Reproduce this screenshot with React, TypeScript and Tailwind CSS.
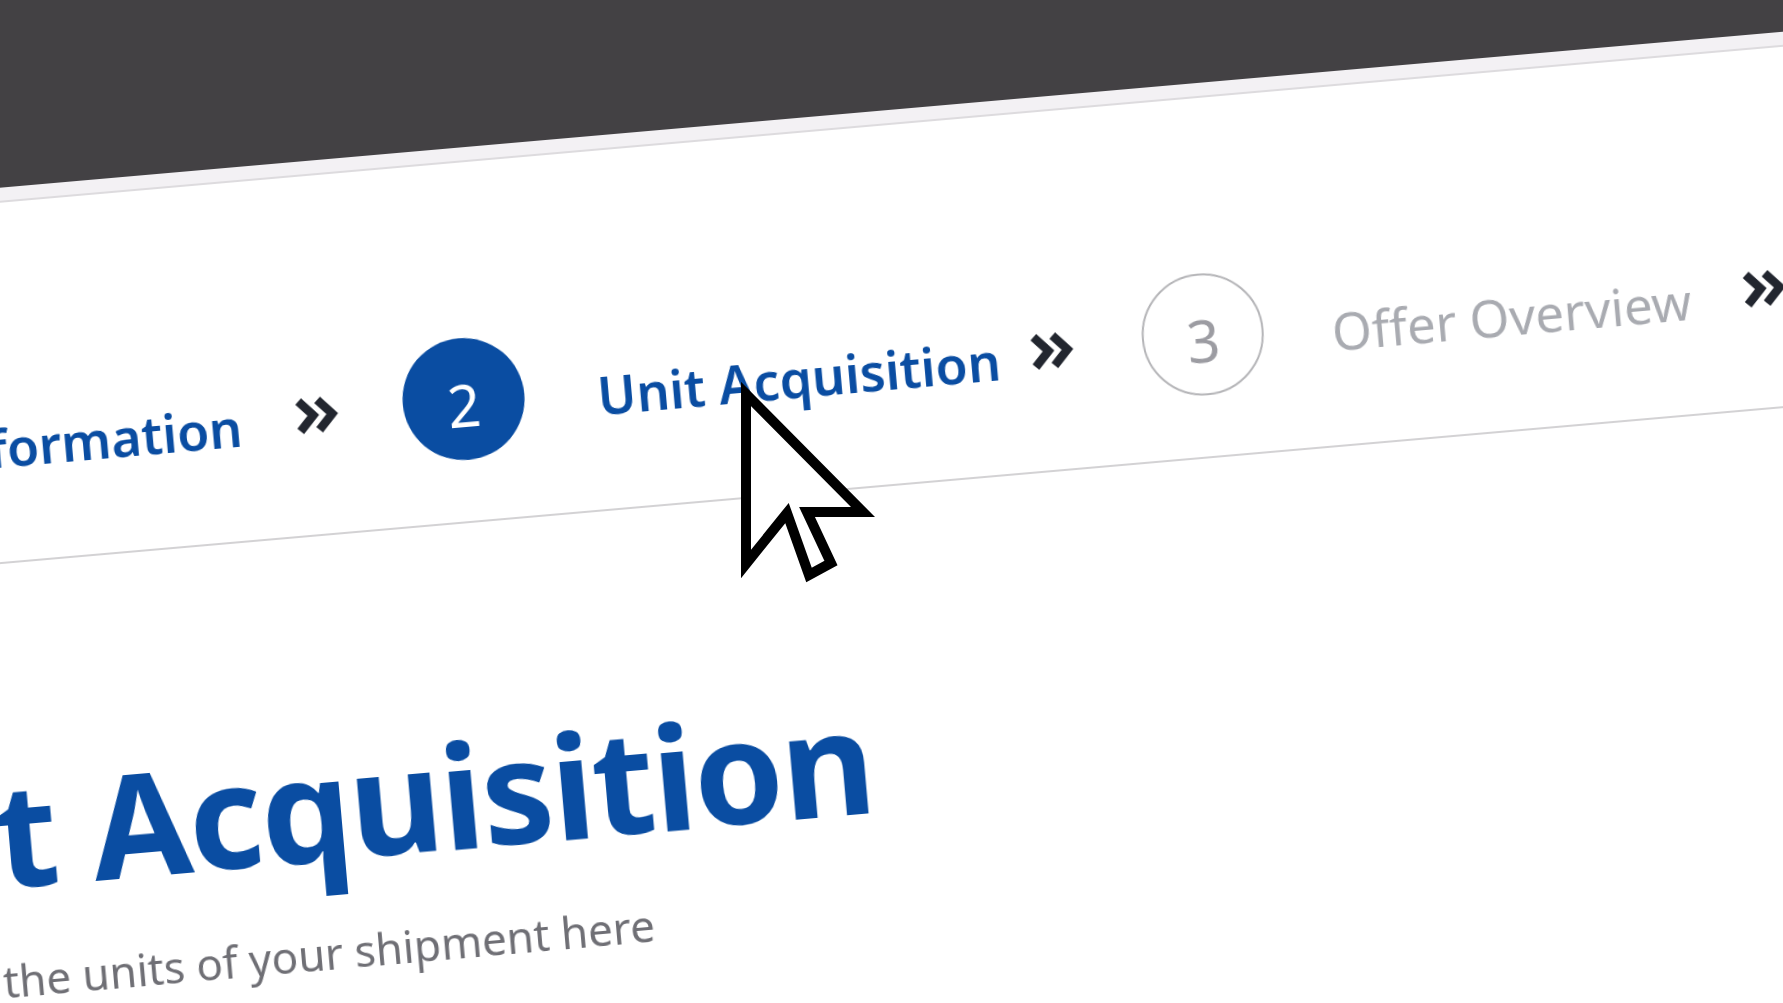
const font = "font-['Noto_Sans',sans-serif]";

function Chevrons() {
  return (
    <svg viewBox="0 0 46 40" className="w-[46px] h-[40px] mt-[6px] shrink-0" fill="none" stroke="#22262f" strokeWidth="8.5">
      <path d="M5 5 L19 20 L5 35" />
      <path d="M24 5 L38 20 L24 35" />
    </svg>
  );
}

function Cursor() {
  return (
    <svg viewBox="0 0 134 204" className="absolute left-[741px] top-[382px] w-[134px] h-[204px]" fill="#fff" stroke="#000" strokeWidth="10" strokeMiterlimit="8">
      <path d="M5 12 L5 182 L46 131 L68 193 L90 181 L66 130 L122 130 Z" />
    </svg>
  );
}

export default function App() {
  return (
    <div className={`relative w-screen h-screen overflow-hidden bg-white ${font}`}>
      <div className="w-[2500px] h-[1700px] -ml-[300px] -mt-[300px] origin-[300px_300px] rotate-[-5deg] blur-[0.5px]">
        <div className="h-[487px] bg-[#434144]" />
        <div className="h-[15px] bg-[#f3f1f4] border-b-2 border-[#dddbde]" />

        <div className="flex items-center pl-[1px] pt-[175px] pb-[61px] border-b-2 border-[#d3d2d4]">
          <div className="w-[122px] h-[122px] shrink-0 rounded-full bg-[#0a4da2] flex items-center justify-center pt-[10px] text-[58px] text-white">1</div>
          <span className="ml-[73px] mt-[16px] text-[52px] leading-none font-semibold text-[#0a4da2]">Information</span>
          <div className="ml-[53px] mr-[63px]"><Chevrons /></div>
          <div className="w-[122px] h-[122px] shrink-0 rounded-full bg-[#0a4da2] flex items-center justify-center pt-[10px] text-[58px] text-white">2</div>
          <span className="ml-[73px] mt-[16px] text-[52px] leading-none font-semibold text-[#0a4da2]">Unit Acquisition</span>
          <div className="ml-[30px] mr-[67px]"><Chevrons /></div>
          <div className="w-[122px] h-[122px] shrink-0 rounded-full border-2 border-[#b5b5b8] flex items-center justify-center pt-[10px] text-[58px] text-[#9c9ca2]">3</div>
          <span className="ml-[68px] mt-[16px] text-[51px] leading-none text-[#a9abb1]">Offer Overview</span>
          <div className="ml-[51px]"><Chevrons /></div>
        </div>

        <div className="pt-[196px]">
          <h1 className="-ml-[17px] text-[144px] leading-none font-bold tracking-[-2px] text-[#0a4da2] whitespace-nowrap">Unit Acquisition</h1>
          <p className="ml-[124px] mt-[54px] text-[44px] leading-none text-[#6f6f75] whitespace-nowrap">Add the units of your shipment here</p>
        </div>
      </div>
      <Cursor />
    </div>
  );
}
